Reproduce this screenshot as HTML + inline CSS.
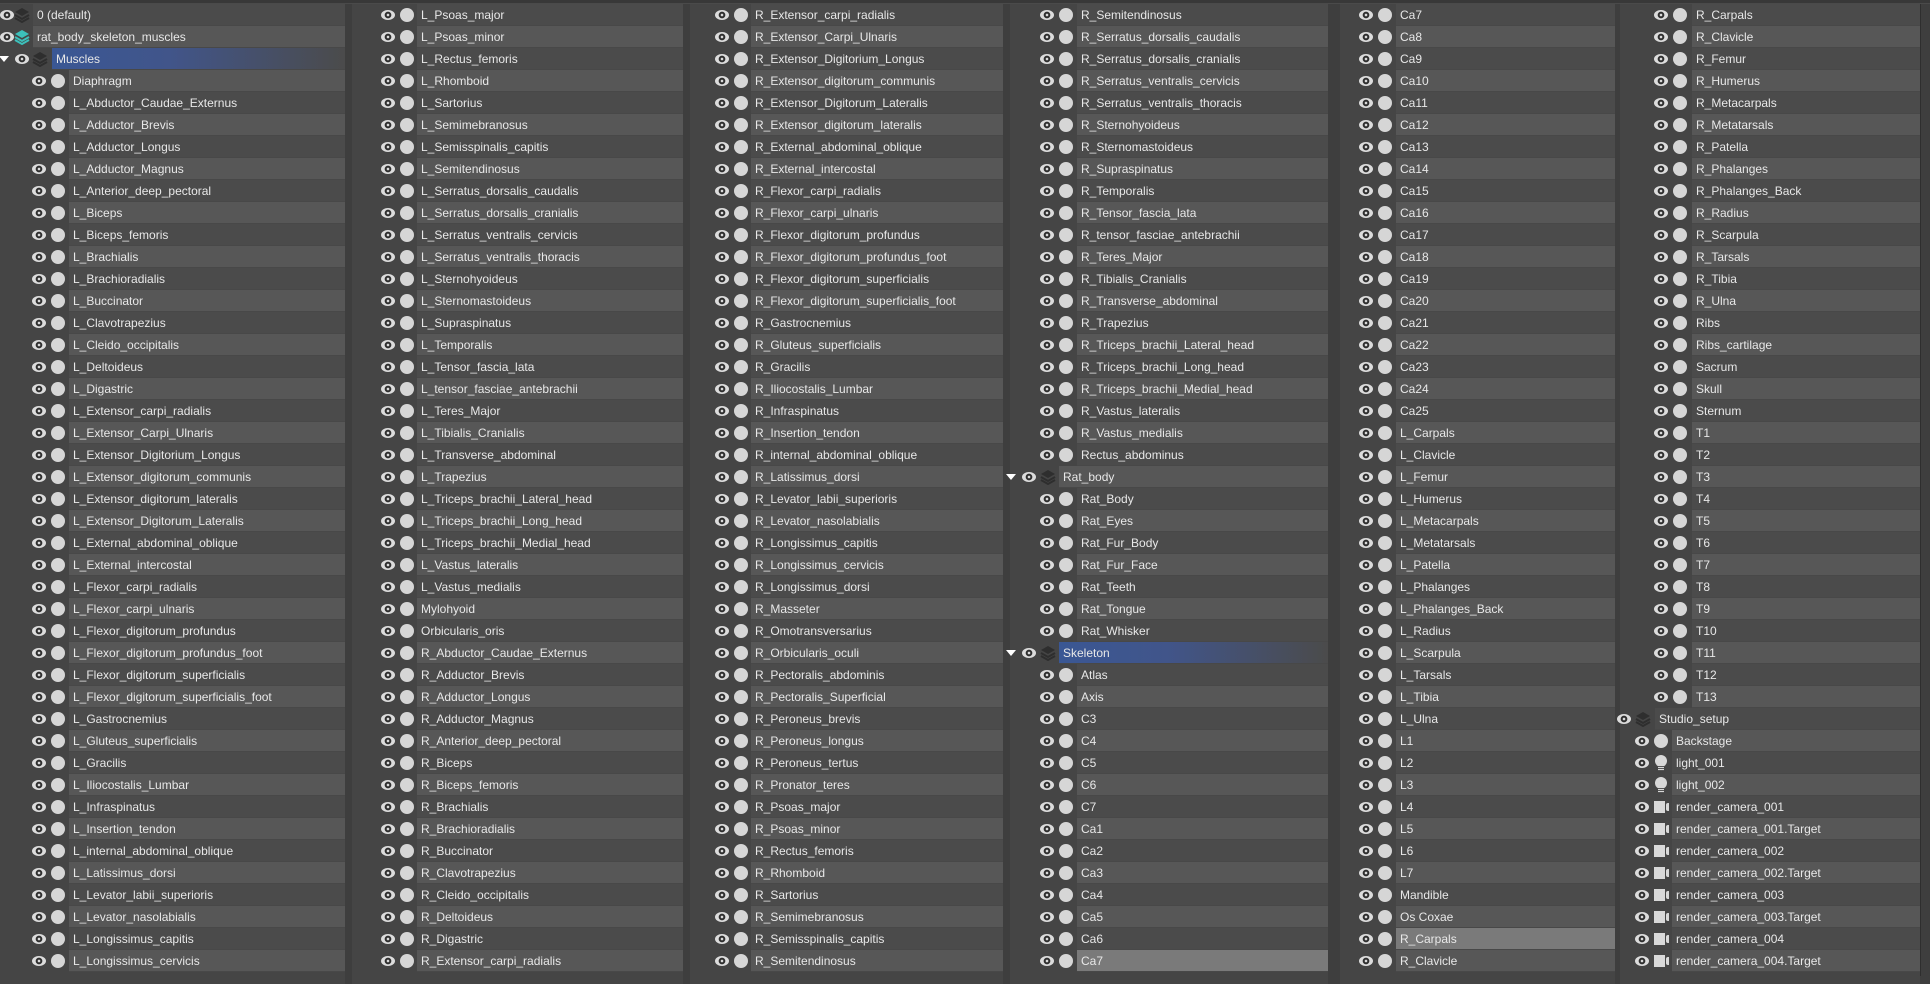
<!DOCTYPE html>
<html><head><meta charset="utf-8">
<style>
html,body{margin:0;padding:0;width:1930px;height:976px;overflow:hidden;background:#3e3e3e;font-family:"Liberation Sans",sans-serif;font-size:12px;color:#e8e8e8}
.top{position:absolute;left:0;top:0;width:1930px;height:4px;background:#383838;border-bottom:1px solid #4a4a4a;box-sizing:border-box}
.col{position:absolute;top:4px;height:980px;background:#454545}
.r{position:relative;height:22px}
.e{position:absolute;top:6px;left:calc(var(--e) - 7px);width:14px;height:10px;border-radius:50%;background:radial-gradient(circle at 50% 50%,#ddd 0 1px,#2e2e2e 1.6px 3px,#dcdcdc 3.6px)}
.o{position:absolute;top:4px;left:calc(var(--c) - 7px);width:14px;height:14px;border-radius:50%;background:#d6d6d6}
.t{position:absolute;top:0;bottom:0;left:var(--b);right:0;padding-left:4px;line-height:22px;white-space:nowrap;overflow:hidden;background:#4b4b4b;border-bottom:1px solid #484848;box-sizing:border-box}
.r:nth-child(even) .t{background:#575757}
.r .t.sel{background:linear-gradient(90deg,#3a5794 0,#41558a 40%,#4b4b4b 100%)}
.r .t.hi{background:#7a7a7a}
.y{position:absolute;top:3px;left:calc(var(--c) - 8px);width:16px;height:16px}
.tri{position:absolute;top:8px;width:0;height:0;border-left:5px solid transparent;border-right:5px solid transparent;border-top:6px solid #fff}
.cam{position:absolute;top:5px;left:calc(var(--c) - 7px);width:11px;height:12px;background:#d8d8d8}
.cam::after{content:"";position:absolute;left:12px;top:2px;width:3px;height:8px;border-radius:2px 0 0 2px;background:#d8d8d8}
.bulb{position:absolute;top:3px;left:calc(var(--c) - 6px);width:12px;height:12px;border-radius:50%;background:#d8d8d8}
.bulb::after{content:"";position:absolute;left:3px;top:10px;width:6px;height:6px;background:repeating-linear-gradient(#d8d8d8 0 1px,#555 1px 2px)}
.vl{position:absolute;top:4px;width:1px;height:972px;background:repeating-linear-gradient(#6a6a6a 0 1px,transparent 1px 3px)}
</style></head><body>
<div class="top"></div>

<div class="col" style="left:0;width:345px;--e:39px;--c:58px;--b:69px">
<div class="r" style="--e:7px;--c:22px;--b:33px"><i class="e"></i><svg class="y" viewBox="0 0 16 16"><path d="M8 1 15 5 8 9 1 5Z" fill="#2e2e2e"/><path d="M1 8 8 12 15 8" stroke="#2e2e2e" stroke-width="2" fill="none"/><path d="M1 11 8 15 15 11" stroke="#2e2e2e" stroke-width="2" fill="none"/></svg><span class="t">0 (default)</span></div>
<div class="r" style="--e:7px;--c:22px;--b:33px"><i class="e"></i><svg class="y" viewBox="0 0 16 16"><path d="M8 1 15 5 8 9 1 5Z" fill="#3cc0bb"/><path d="M1 8 8 12 15 8" stroke="#3cc0bb" stroke-width="2" fill="none"/><path d="M1 11 8 15 15 11" stroke="#3cc0bb" stroke-width="2" fill="none"/></svg><span class="t">rat_body_skeleton_muscles</span></div>
<div class="r" style="--e:22px;--c:40px;--b:52px"><i class="tri" style="left:-1px"></i><i class="e"></i><svg class="y" viewBox="0 0 16 16"><path d="M8 1 15 5 8 9 1 5Z" fill="#2e2e2e"/><path d="M1 8 8 12 15 8" stroke="#2e2e2e" stroke-width="2" fill="none"/><path d="M1 11 8 15 15 11" stroke="#2e2e2e" stroke-width="2" fill="none"/></svg><span class="t sel">Muscles</span></div>
<div class="r"><i class="e"></i><i class="o"></i><span class="t">Diaphragm</span></div>
<div class="r"><i class="e"></i><i class="o"></i><span class="t">L_Abductor_Caudae_Externus</span></div>
<div class="r"><i class="e"></i><i class="o"></i><span class="t">L_Adductor_Brevis</span></div>
<div class="r"><i class="e"></i><i class="o"></i><span class="t">L_Adductor_Longus</span></div>
<div class="r"><i class="e"></i><i class="o"></i><span class="t">L_Adductor_Magnus</span></div>
<div class="r"><i class="e"></i><i class="o"></i><span class="t">L_Anterior_deep_pectoral</span></div>
<div class="r"><i class="e"></i><i class="o"></i><span class="t">L_Biceps</span></div>
<div class="r"><i class="e"></i><i class="o"></i><span class="t">L_Biceps_femoris</span></div>
<div class="r"><i class="e"></i><i class="o"></i><span class="t">L_Brachialis</span></div>
<div class="r"><i class="e"></i><i class="o"></i><span class="t">L_Brachioradialis</span></div>
<div class="r"><i class="e"></i><i class="o"></i><span class="t">L_Buccinator</span></div>
<div class="r"><i class="e"></i><i class="o"></i><span class="t">L_Clavotrapezius</span></div>
<div class="r"><i class="e"></i><i class="o"></i><span class="t">L_Cleido_occipitalis</span></div>
<div class="r"><i class="e"></i><i class="o"></i><span class="t">L_Deltoideus</span></div>
<div class="r"><i class="e"></i><i class="o"></i><span class="t">L_Digastric</span></div>
<div class="r"><i class="e"></i><i class="o"></i><span class="t">L_Extensor_carpi_radialis</span></div>
<div class="r"><i class="e"></i><i class="o"></i><span class="t">L_Extensor_Carpi_Ulnaris</span></div>
<div class="r"><i class="e"></i><i class="o"></i><span class="t">L_Extensor_Digitorium_Longus</span></div>
<div class="r"><i class="e"></i><i class="o"></i><span class="t">L_Extensor_digitorum_communis</span></div>
<div class="r"><i class="e"></i><i class="o"></i><span class="t">L_Extensor_digitorum_lateralis</span></div>
<div class="r"><i class="e"></i><i class="o"></i><span class="t">L_Extensor_Digitorum_Lateralis</span></div>
<div class="r"><i class="e"></i><i class="o"></i><span class="t">L_External_abdominal_oblique</span></div>
<div class="r"><i class="e"></i><i class="o"></i><span class="t">L_External_intercostal</span></div>
<div class="r"><i class="e"></i><i class="o"></i><span class="t">L_Flexor_carpi_radialis</span></div>
<div class="r"><i class="e"></i><i class="o"></i><span class="t">L_Flexor_carpi_ulnaris</span></div>
<div class="r"><i class="e"></i><i class="o"></i><span class="t">L_Flexor_digitorum_profundus</span></div>
<div class="r"><i class="e"></i><i class="o"></i><span class="t">L_Flexor_digitorum_profundus_foot</span></div>
<div class="r"><i class="e"></i><i class="o"></i><span class="t">L_Flexor_digitorum_superficialis</span></div>
<div class="r"><i class="e"></i><i class="o"></i><span class="t">L_Flexor_digitorum_superficialis_foot</span></div>
<div class="r"><i class="e"></i><i class="o"></i><span class="t">L_Gastrocnemius</span></div>
<div class="r"><i class="e"></i><i class="o"></i><span class="t">L_Gluteus_superficialis</span></div>
<div class="r"><i class="e"></i><i class="o"></i><span class="t">L_Gracilis</span></div>
<div class="r"><i class="e"></i><i class="o"></i><span class="t">L_Iliocostalis_Lumbar</span></div>
<div class="r"><i class="e"></i><i class="o"></i><span class="t">L_Infraspinatus</span></div>
<div class="r"><i class="e"></i><i class="o"></i><span class="t">L_Insertion_tendon</span></div>
<div class="r"><i class="e"></i><i class="o"></i><span class="t">L_internal_abdominal_oblique</span></div>
<div class="r"><i class="e"></i><i class="o"></i><span class="t">L_Latissimus_dorsi</span></div>
<div class="r"><i class="e"></i><i class="o"></i><span class="t">L_Levator_labii_superioris</span></div>
<div class="r"><i class="e"></i><i class="o"></i><span class="t">L_Levator_nasolabialis</span></div>
<div class="r"><i class="e"></i><i class="o"></i><span class="t">L_Longissimus_capitis</span></div>
<div class="r"><i class="e"></i><i class="o"></i><span class="t">L_Longissimus_cervicis</span></div>
</div>

<div class="col" style="left:352px;width:331px;--e:36px;--c:55px;--b:65px">
<div class="r"><i class="e"></i><i class="o"></i><span class="t">L_Psoas_major</span></div>
<div class="r"><i class="e"></i><i class="o"></i><span class="t">L_Psoas_minor</span></div>
<div class="r"><i class="e"></i><i class="o"></i><span class="t">L_Rectus_femoris</span></div>
<div class="r"><i class="e"></i><i class="o"></i><span class="t">L_Rhomboid</span></div>
<div class="r"><i class="e"></i><i class="o"></i><span class="t">L_Sartorius</span></div>
<div class="r"><i class="e"></i><i class="o"></i><span class="t">L_Semimebranosus</span></div>
<div class="r"><i class="e"></i><i class="o"></i><span class="t">L_Semisspinalis_capitis</span></div>
<div class="r"><i class="e"></i><i class="o"></i><span class="t">L_Semitendinosus</span></div>
<div class="r"><i class="e"></i><i class="o"></i><span class="t">L_Serratus_dorsalis_caudalis</span></div>
<div class="r"><i class="e"></i><i class="o"></i><span class="t">L_Serratus_dorsalis_cranialis</span></div>
<div class="r"><i class="e"></i><i class="o"></i><span class="t">L_Serratus_ventralis_cervicis</span></div>
<div class="r"><i class="e"></i><i class="o"></i><span class="t">L_Serratus_ventralis_thoracis</span></div>
<div class="r"><i class="e"></i><i class="o"></i><span class="t">L_Sternohyoideus</span></div>
<div class="r"><i class="e"></i><i class="o"></i><span class="t">L_Sternomastoideus</span></div>
<div class="r"><i class="e"></i><i class="o"></i><span class="t">L_Supraspinatus</span></div>
<div class="r"><i class="e"></i><i class="o"></i><span class="t">L_Temporalis</span></div>
<div class="r"><i class="e"></i><i class="o"></i><span class="t">L_Tensor_fascia_lata</span></div>
<div class="r"><i class="e"></i><i class="o"></i><span class="t">L_tensor_fasciae_antebrachii</span></div>
<div class="r"><i class="e"></i><i class="o"></i><span class="t">L_Teres_Major</span></div>
<div class="r"><i class="e"></i><i class="o"></i><span class="t">L_Tibialis_Cranialis</span></div>
<div class="r"><i class="e"></i><i class="o"></i><span class="t">L_Transverse_abdominal</span></div>
<div class="r"><i class="e"></i><i class="o"></i><span class="t">L_Trapezius</span></div>
<div class="r"><i class="e"></i><i class="o"></i><span class="t">L_Triceps_brachii_Lateral_head</span></div>
<div class="r"><i class="e"></i><i class="o"></i><span class="t">L_Triceps_brachii_Long_head</span></div>
<div class="r"><i class="e"></i><i class="o"></i><span class="t">L_Triceps_brachii_Medial_head</span></div>
<div class="r"><i class="e"></i><i class="o"></i><span class="t">L_Vastus_lateralis</span></div>
<div class="r"><i class="e"></i><i class="o"></i><span class="t">L_Vastus_medialis</span></div>
<div class="r"><i class="e"></i><i class="o"></i><span class="t">Mylohyoid</span></div>
<div class="r"><i class="e"></i><i class="o"></i><span class="t">Orbicularis_oris</span></div>
<div class="r"><i class="e"></i><i class="o"></i><span class="t">R_Abductor_Caudae_Externus</span></div>
<div class="r"><i class="e"></i><i class="o"></i><span class="t">R_Adductor_Brevis</span></div>
<div class="r"><i class="e"></i><i class="o"></i><span class="t">R_Adductor_Longus</span></div>
<div class="r"><i class="e"></i><i class="o"></i><span class="t">R_Adductor_Magnus</span></div>
<div class="r"><i class="e"></i><i class="o"></i><span class="t">R_Anterior_deep_pectoral</span></div>
<div class="r"><i class="e"></i><i class="o"></i><span class="t">R_Biceps</span></div>
<div class="r"><i class="e"></i><i class="o"></i><span class="t">R_Biceps_femoris</span></div>
<div class="r"><i class="e"></i><i class="o"></i><span class="t">R_Brachialis</span></div>
<div class="r"><i class="e"></i><i class="o"></i><span class="t">R_Brachioradialis</span></div>
<div class="r"><i class="e"></i><i class="o"></i><span class="t">R_Buccinator</span></div>
<div class="r"><i class="e"></i><i class="o"></i><span class="t">R_Clavotrapezius</span></div>
<div class="r"><i class="e"></i><i class="o"></i><span class="t">R_Cleido_occipitalis</span></div>
<div class="r"><i class="e"></i><i class="o"></i><span class="t">R_Deltoideus</span></div>
<div class="r"><i class="e"></i><i class="o"></i><span class="t">R_Digastric</span></div>
<div class="r"><i class="e"></i><i class="o"></i><span class="t">R_Extensor_carpi_radialis</span></div>
</div>

<div class="col" style="left:690px;width:313px;--e:32px;--c:51px;--b:61px">
<div class="r"><i class="e"></i><i class="o"></i><span class="t">R_Extensor_carpi_radialis</span></div>
<div class="r"><i class="e"></i><i class="o"></i><span class="t">R_Extensor_Carpi_Ulnaris</span></div>
<div class="r"><i class="e"></i><i class="o"></i><span class="t">R_Extensor_Digitorium_Longus</span></div>
<div class="r"><i class="e"></i><i class="o"></i><span class="t">R_Extensor_digitorum_communis</span></div>
<div class="r"><i class="e"></i><i class="o"></i><span class="t">R_Extensor_Digitorum_Lateralis</span></div>
<div class="r"><i class="e"></i><i class="o"></i><span class="t">R_Extensor_digitorum_lateralis</span></div>
<div class="r"><i class="e"></i><i class="o"></i><span class="t">R_External_abdominal_oblique</span></div>
<div class="r"><i class="e"></i><i class="o"></i><span class="t">R_External_intercostal</span></div>
<div class="r"><i class="e"></i><i class="o"></i><span class="t">R_Flexor_carpi_radialis</span></div>
<div class="r"><i class="e"></i><i class="o"></i><span class="t">R_Flexor_carpi_ulnaris</span></div>
<div class="r"><i class="e"></i><i class="o"></i><span class="t">R_Flexor_digitorum_profundus</span></div>
<div class="r"><i class="e"></i><i class="o"></i><span class="t">R_Flexor_digitorum_profundus_foot</span></div>
<div class="r"><i class="e"></i><i class="o"></i><span class="t">R_Flexor_digitorum_superficialis</span></div>
<div class="r"><i class="e"></i><i class="o"></i><span class="t">R_Flexor_digitorum_superficialis_foot</span></div>
<div class="r"><i class="e"></i><i class="o"></i><span class="t">R_Gastrocnemius</span></div>
<div class="r"><i class="e"></i><i class="o"></i><span class="t">R_Gluteus_superficialis</span></div>
<div class="r"><i class="e"></i><i class="o"></i><span class="t">R_Gracilis</span></div>
<div class="r"><i class="e"></i><i class="o"></i><span class="t">R_Iliocostalis_Lumbar</span></div>
<div class="r"><i class="e"></i><i class="o"></i><span class="t">R_Infraspinatus</span></div>
<div class="r"><i class="e"></i><i class="o"></i><span class="t">R_Insertion_tendon</span></div>
<div class="r"><i class="e"></i><i class="o"></i><span class="t">R_internal_abdominal_oblique</span></div>
<div class="r"><i class="e"></i><i class="o"></i><span class="t">R_Latissimus_dorsi</span></div>
<div class="r"><i class="e"></i><i class="o"></i><span class="t">R_Levator_labii_superioris</span></div>
<div class="r"><i class="e"></i><i class="o"></i><span class="t">R_Levator_nasolabialis</span></div>
<div class="r"><i class="e"></i><i class="o"></i><span class="t">R_Longissimus_capitis</span></div>
<div class="r"><i class="e"></i><i class="o"></i><span class="t">R_Longissimus_cervicis</span></div>
<div class="r"><i class="e"></i><i class="o"></i><span class="t">R_Longissimus_dorsi</span></div>
<div class="r"><i class="e"></i><i class="o"></i><span class="t">R_Masseter</span></div>
<div class="r"><i class="e"></i><i class="o"></i><span class="t">R_Omotransversarius</span></div>
<div class="r"><i class="e"></i><i class="o"></i><span class="t">R_Orbicularis_oculi</span></div>
<div class="r"><i class="e"></i><i class="o"></i><span class="t">R_Pectoralis_abdominis</span></div>
<div class="r"><i class="e"></i><i class="o"></i><span class="t">R_Pectoralis_Superficial</span></div>
<div class="r"><i class="e"></i><i class="o"></i><span class="t">R_Peroneus_brevis</span></div>
<div class="r"><i class="e"></i><i class="o"></i><span class="t">R_Peroneus_longus</span></div>
<div class="r"><i class="e"></i><i class="o"></i><span class="t">R_Peroneus_tertus</span></div>
<div class="r"><i class="e"></i><i class="o"></i><span class="t">R_Pronator_teres</span></div>
<div class="r"><i class="e"></i><i class="o"></i><span class="t">R_Psoas_major</span></div>
<div class="r"><i class="e"></i><i class="o"></i><span class="t">R_Psoas_minor</span></div>
<div class="r"><i class="e"></i><i class="o"></i><span class="t">R_Rectus_femoris</span></div>
<div class="r"><i class="e"></i><i class="o"></i><span class="t">R_Rhomboid</span></div>
<div class="r"><i class="e"></i><i class="o"></i><span class="t">R_Sartorius</span></div>
<div class="r"><i class="e"></i><i class="o"></i><span class="t">R_Semimebranosus</span></div>
<div class="r"><i class="e"></i><i class="o"></i><span class="t">R_Semisspinalis_capitis</span></div>
<div class="r"><i class="e"></i><i class="o"></i><span class="t">R_Semitendinosus</span></div>
</div>

<div class="col" style="left:1010px;width:318px;--e:37px;--c:56px;--b:67px">
<div class="r"><i class="e"></i><i class="o"></i><span class="t">R_Semitendinosus</span></div>
<div class="r"><i class="e"></i><i class="o"></i><span class="t">R_Serratus_dorsalis_caudalis</span></div>
<div class="r"><i class="e"></i><i class="o"></i><span class="t">R_Serratus_dorsalis_cranialis</span></div>
<div class="r"><i class="e"></i><i class="o"></i><span class="t">R_Serratus_ventralis_cervicis</span></div>
<div class="r"><i class="e"></i><i class="o"></i><span class="t">R_Serratus_ventralis_thoracis</span></div>
<div class="r"><i class="e"></i><i class="o"></i><span class="t">R_Sternohyoideus</span></div>
<div class="r"><i class="e"></i><i class="o"></i><span class="t">R_Sternomastoideus</span></div>
<div class="r"><i class="e"></i><i class="o"></i><span class="t">R_Supraspinatus</span></div>
<div class="r"><i class="e"></i><i class="o"></i><span class="t">R_Temporalis</span></div>
<div class="r"><i class="e"></i><i class="o"></i><span class="t">R_Tensor_fascia_lata</span></div>
<div class="r"><i class="e"></i><i class="o"></i><span class="t">R_tensor_fasciae_antebrachii</span></div>
<div class="r"><i class="e"></i><i class="o"></i><span class="t">R_Teres_Major</span></div>
<div class="r"><i class="e"></i><i class="o"></i><span class="t">R_Tibialis_Cranialis</span></div>
<div class="r"><i class="e"></i><i class="o"></i><span class="t">R_Transverse_abdominal</span></div>
<div class="r"><i class="e"></i><i class="o"></i><span class="t">R_Trapezius</span></div>
<div class="r"><i class="e"></i><i class="o"></i><span class="t">R_Triceps_brachii_Lateral_head</span></div>
<div class="r"><i class="e"></i><i class="o"></i><span class="t">R_Triceps_brachii_Long_head</span></div>
<div class="r"><i class="e"></i><i class="o"></i><span class="t">R_Triceps_brachii_Medial_head</span></div>
<div class="r"><i class="e"></i><i class="o"></i><span class="t">R_Vastus_lateralis</span></div>
<div class="r"><i class="e"></i><i class="o"></i><span class="t">R_Vastus_medialis</span></div>
<div class="r"><i class="e"></i><i class="o"></i><span class="t">Rectus_abdominus</span></div>
<div class="r" style="--e:19px;--c:38px;--b:49px"><i class="tri" style="left:-4px"></i><i class="e"></i><svg class="y" viewBox="0 0 16 16"><path d="M8 1 15 5 8 9 1 5Z" fill="#2e2e2e"/><path d="M1 8 8 12 15 8" stroke="#2e2e2e" stroke-width="2" fill="none"/><path d="M1 11 8 15 15 11" stroke="#2e2e2e" stroke-width="2" fill="none"/></svg><span class="t">Rat_body</span></div>
<div class="r"><i class="e"></i><i class="o"></i><span class="t">Rat_Body</span></div>
<div class="r"><i class="e"></i><i class="o"></i><span class="t">Rat_Eyes</span></div>
<div class="r"><i class="e"></i><i class="o"></i><span class="t">Rat_Fur_Body</span></div>
<div class="r"><i class="e"></i><i class="o"></i><span class="t">Rat_Fur_Face</span></div>
<div class="r"><i class="e"></i><i class="o"></i><span class="t">Rat_Teeth</span></div>
<div class="r"><i class="e"></i><i class="o"></i><span class="t">Rat_Tongue</span></div>
<div class="r"><i class="e"></i><i class="o"></i><span class="t">Rat_Whisker</span></div>
<div class="r" style="--e:19px;--c:38px;--b:49px"><i class="tri" style="left:-4px"></i><i class="e"></i><svg class="y" viewBox="0 0 16 16"><path d="M8 1 15 5 8 9 1 5Z" fill="#2e2e2e"/><path d="M1 8 8 12 15 8" stroke="#2e2e2e" stroke-width="2" fill="none"/><path d="M1 11 8 15 15 11" stroke="#2e2e2e" stroke-width="2" fill="none"/></svg><span class="t sel">Skeleton</span></div>
<div class="r"><i class="e"></i><i class="o"></i><span class="t">Atlas</span></div>
<div class="r"><i class="e"></i><i class="o"></i><span class="t">Axis</span></div>
<div class="r"><i class="e"></i><i class="o"></i><span class="t">C3</span></div>
<div class="r"><i class="e"></i><i class="o"></i><span class="t">C4</span></div>
<div class="r"><i class="e"></i><i class="o"></i><span class="t">C5</span></div>
<div class="r"><i class="e"></i><i class="o"></i><span class="t">C6</span></div>
<div class="r"><i class="e"></i><i class="o"></i><span class="t">C7</span></div>
<div class="r"><i class="e"></i><i class="o"></i><span class="t">Ca1</span></div>
<div class="r"><i class="e"></i><i class="o"></i><span class="t">Ca2</span></div>
<div class="r"><i class="e"></i><i class="o"></i><span class="t">Ca3</span></div>
<div class="r"><i class="e"></i><i class="o"></i><span class="t">Ca4</span></div>
<div class="r"><i class="e"></i><i class="o"></i><span class="t">Ca5</span></div>
<div class="r"><i class="e"></i><i class="o"></i><span class="t">Ca6</span></div>
<div class="r"><i class="e"></i><i class="o"></i><span class="t hi">Ca7</span></div>
</div>

<div class="col" style="left:1340px;width:275px;--e:26px;--c:45px;--b:56px">
<div class="r"><i class="e"></i><i class="o"></i><span class="t">Ca7</span></div>
<div class="r"><i class="e"></i><i class="o"></i><span class="t">Ca8</span></div>
<div class="r"><i class="e"></i><i class="o"></i><span class="t">Ca9</span></div>
<div class="r"><i class="e"></i><i class="o"></i><span class="t">Ca10</span></div>
<div class="r"><i class="e"></i><i class="o"></i><span class="t">Ca11</span></div>
<div class="r"><i class="e"></i><i class="o"></i><span class="t">Ca12</span></div>
<div class="r"><i class="e"></i><i class="o"></i><span class="t">Ca13</span></div>
<div class="r"><i class="e"></i><i class="o"></i><span class="t">Ca14</span></div>
<div class="r"><i class="e"></i><i class="o"></i><span class="t">Ca15</span></div>
<div class="r"><i class="e"></i><i class="o"></i><span class="t">Ca16</span></div>
<div class="r"><i class="e"></i><i class="o"></i><span class="t">Ca17</span></div>
<div class="r"><i class="e"></i><i class="o"></i><span class="t">Ca18</span></div>
<div class="r"><i class="e"></i><i class="o"></i><span class="t">Ca19</span></div>
<div class="r"><i class="e"></i><i class="o"></i><span class="t">Ca20</span></div>
<div class="r"><i class="e"></i><i class="o"></i><span class="t">Ca21</span></div>
<div class="r"><i class="e"></i><i class="o"></i><span class="t">Ca22</span></div>
<div class="r"><i class="e"></i><i class="o"></i><span class="t">Ca23</span></div>
<div class="r"><i class="e"></i><i class="o"></i><span class="t">Ca24</span></div>
<div class="r"><i class="e"></i><i class="o"></i><span class="t">Ca25</span></div>
<div class="r"><i class="e"></i><i class="o"></i><span class="t">L_Carpals</span></div>
<div class="r"><i class="e"></i><i class="o"></i><span class="t">L_Clavicle</span></div>
<div class="r"><i class="e"></i><i class="o"></i><span class="t">L_Femur</span></div>
<div class="r"><i class="e"></i><i class="o"></i><span class="t">L_Humerus</span></div>
<div class="r"><i class="e"></i><i class="o"></i><span class="t">L_Metacarpals</span></div>
<div class="r"><i class="e"></i><i class="o"></i><span class="t">L_Metatarsals</span></div>
<div class="r"><i class="e"></i><i class="o"></i><span class="t">L_Patella</span></div>
<div class="r"><i class="e"></i><i class="o"></i><span class="t">L_Phalanges</span></div>
<div class="r"><i class="e"></i><i class="o"></i><span class="t">L_Phalanges_Back</span></div>
<div class="r"><i class="e"></i><i class="o"></i><span class="t">L_Radius</span></div>
<div class="r"><i class="e"></i><i class="o"></i><span class="t">L_Scarpula</span></div>
<div class="r"><i class="e"></i><i class="o"></i><span class="t">L_Tarsals</span></div>
<div class="r"><i class="e"></i><i class="o"></i><span class="t">L_Tibia</span></div>
<div class="r"><i class="e"></i><i class="o"></i><span class="t">L_Ulna</span></div>
<div class="r"><i class="e"></i><i class="o"></i><span class="t">L1</span></div>
<div class="r"><i class="e"></i><i class="o"></i><span class="t">L2</span></div>
<div class="r"><i class="e"></i><i class="o"></i><span class="t">L3</span></div>
<div class="r"><i class="e"></i><i class="o"></i><span class="t">L4</span></div>
<div class="r"><i class="e"></i><i class="o"></i><span class="t">L5</span></div>
<div class="r"><i class="e"></i><i class="o"></i><span class="t">L6</span></div>
<div class="r"><i class="e"></i><i class="o"></i><span class="t">L7</span></div>
<div class="r"><i class="e"></i><i class="o"></i><span class="t">Mandible</span></div>
<div class="r"><i class="e"></i><i class="o"></i><span class="t">Os Coxae</span></div>
<div class="r"><i class="e"></i><i class="o"></i><span class="t hi">R_Carpals</span></div>
<div class="r"><i class="e"></i><i class="o"></i><span class="t">R_Clavicle</span></div>
</div>

<div class="col" style="left:1620px;width:300px;--e:41px;--c:60px;--b:72px">
<div class="r"><i class="e"></i><i class="o"></i><span class="t">R_Carpals</span></div>
<div class="r"><i class="e"></i><i class="o"></i><span class="t">R_Clavicle</span></div>
<div class="r"><i class="e"></i><i class="o"></i><span class="t">R_Femur</span></div>
<div class="r"><i class="e"></i><i class="o"></i><span class="t">R_Humerus</span></div>
<div class="r"><i class="e"></i><i class="o"></i><span class="t">R_Metacarpals</span></div>
<div class="r"><i class="e"></i><i class="o"></i><span class="t">R_Metatarsals</span></div>
<div class="r"><i class="e"></i><i class="o"></i><span class="t">R_Patella</span></div>
<div class="r"><i class="e"></i><i class="o"></i><span class="t">R_Phalanges</span></div>
<div class="r"><i class="e"></i><i class="o"></i><span class="t">R_Phalanges_Back</span></div>
<div class="r"><i class="e"></i><i class="o"></i><span class="t">R_Radius</span></div>
<div class="r"><i class="e"></i><i class="o"></i><span class="t">R_Scarpula</span></div>
<div class="r"><i class="e"></i><i class="o"></i><span class="t">R_Tarsals</span></div>
<div class="r"><i class="e"></i><i class="o"></i><span class="t">R_Tibia</span></div>
<div class="r"><i class="e"></i><i class="o"></i><span class="t">R_Ulna</span></div>
<div class="r"><i class="e"></i><i class="o"></i><span class="t">Ribs</span></div>
<div class="r"><i class="e"></i><i class="o"></i><span class="t">Ribs_cartilage</span></div>
<div class="r"><i class="e"></i><i class="o"></i><span class="t">Sacrum</span></div>
<div class="r"><i class="e"></i><i class="o"></i><span class="t">Skull</span></div>
<div class="r"><i class="e"></i><i class="o"></i><span class="t">Sternum</span></div>
<div class="r"><i class="e"></i><i class="o"></i><span class="t">T1</span></div>
<div class="r"><i class="e"></i><i class="o"></i><span class="t">T2</span></div>
<div class="r"><i class="e"></i><i class="o"></i><span class="t">T3</span></div>
<div class="r"><i class="e"></i><i class="o"></i><span class="t">T4</span></div>
<div class="r"><i class="e"></i><i class="o"></i><span class="t">T5</span></div>
<div class="r"><i class="e"></i><i class="o"></i><span class="t">T6</span></div>
<div class="r"><i class="e"></i><i class="o"></i><span class="t">T7</span></div>
<div class="r"><i class="e"></i><i class="o"></i><span class="t">T8</span></div>
<div class="r"><i class="e"></i><i class="o"></i><span class="t">T9</span></div>
<div class="r"><i class="e"></i><i class="o"></i><span class="t">T10</span></div>
<div class="r"><i class="e"></i><i class="o"></i><span class="t">T11</span></div>
<div class="r"><i class="e"></i><i class="o"></i><span class="t">T12</span></div>
<div class="r"><i class="e"></i><i class="o"></i><span class="t">T13</span></div>
<div class="r" style="--e:4px;--c:23px;--b:35px"><i class="e"></i><svg class="y" viewBox="0 0 16 16"><path d="M8 1 15 5 8 9 1 5Z" fill="#2e2e2e"/><path d="M1 8 8 12 15 8" stroke="#2e2e2e" stroke-width="2" fill="none"/><path d="M1 11 8 15 15 11" stroke="#2e2e2e" stroke-width="2" fill="none"/></svg><span class="t">Studio_setup</span></div>
<div class="r" style="--e:22px;--c:41px;--b:52px"><i class="e"></i><i class="o"></i><span class="t">Backstage</span></div>
<div class="r" style="--e:22px;--c:41px;--b:52px"><i class="e"></i><i class="bulb"></i><span class="t">light_001</span></div>
<div class="r" style="--e:22px;--c:41px;--b:52px"><i class="e"></i><i class="bulb"></i><span class="t">light_002</span></div>
<div class="r" style="--e:22px;--c:41px;--b:52px"><i class="e"></i><i class="cam"></i><span class="t">render_camera_001</span></div>
<div class="r" style="--e:22px;--c:41px;--b:52px"><i class="e"></i><i class="cam"></i><span class="t">render_camera_001.Target</span></div>
<div class="r" style="--e:22px;--c:41px;--b:52px"><i class="e"></i><i class="cam"></i><span class="t">render_camera_002</span></div>
<div class="r" style="--e:22px;--c:41px;--b:52px"><i class="e"></i><i class="cam"></i><span class="t">render_camera_002.Target</span></div>
<div class="r" style="--e:22px;--c:41px;--b:52px"><i class="e"></i><i class="cam"></i><span class="t">render_camera_003</span></div>
<div class="r" style="--e:22px;--c:41px;--b:52px"><i class="e"></i><i class="cam"></i><span class="t">render_camera_003.Target</span></div>
<div class="r" style="--e:22px;--c:41px;--b:52px"><i class="e"></i><i class="cam"></i><span class="t">render_camera_004</span></div>
<div class="r" style="--e:22px;--c:41px;--b:52px"><i class="e"></i><i class="cam"></i><span class="t">render_camera_004.Target</span></div>
</div>
<div class="vl" style="left:1920px;background:#2e2e2e"></div>
</body></html>
